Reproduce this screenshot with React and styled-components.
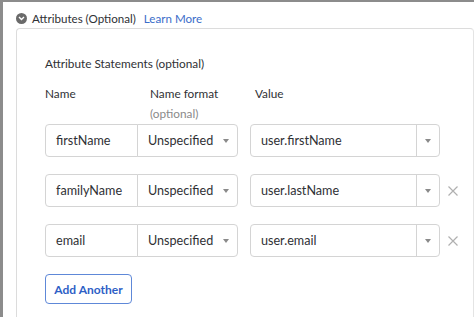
import React from 'react'
import styled, { createGlobalStyle } from 'styled-components'

const GlobalStyle = createGlobalStyle`
  html, body {
    margin: 0;
    padding: 0;
    background: #fff;
  }
  body {
    font-family: Lato, "Liberation Sans", sans-serif;
    color: #2f3135;
  }
`

const Frame = styled.div`
  width: 474px;
  height: 317px;
  box-sizing: border-box;
  border-top: 2px solid #8c8c8c;
  border-left: 3px solid #8c8c8c;
  overflow: hidden;
  padding: 8px 0 0 13px;
`

const SectionHeader = styled.div`
  display: flex;
  align-items: center;
  gap: 5px;
  height: 16px;
  font-size: 12px;
  margin-bottom: 2px;
`

const Toggle = styled.span`
  width: 11px;
  height: 11px;
  border-radius: 50%;
  background: #6a6a6a;
  display: flex;
  align-items: center;
  justify-content: center;
`

const HeaderTitle = styled.span`
  color: #2f3135;
  font-size: 11.6px;
`

const LearnMore = styled.a`
  color: #3b6dc9;
  margin-left: 3px;
  font-size: 11.6px;
  text-decoration: none;
`

const Card = styled.div`
  border: 1px solid #dcdcdc;
  border-right: 1px solid #e4e4e4;
  border-radius: 4px;
  padding: 26px 0 0 28px;
  height: 320px;
  box-sizing: border-box;
`

const CardTitle = styled.div`
  font-size: 11.8px;
  line-height: 18px;
  margin-bottom: 12px;
`

const Labels = styled.div`
  display: grid;
  grid-template-columns: 105px 105px 1fr;
  font-size: 11.8px;
  line-height: 18px;
  margin-bottom: 1px;
`

const Label = styled.div`
  display: flex;
  flex-direction: column;
  gap: 2px;
`

const Hint = styled.span`
  color: #8a8a8a;
`

const Rows = styled.div`
  display: flex;
  flex-direction: column;
  gap: 17px;
`

const Row = styled.div`
  display: flex;
  align-items: center;
`

const Field = styled.div`
  box-sizing: border-box;
  height: 33px;
  width: ${p => p.$w}px;
  border: 1px solid #d4d4d4;
  border-radius: ${p => p.$radius};
  margin-left: ${p => p.$ml || 0}px;
  display: flex;
  align-items: center;
  font-size: 12.6px;
  background: #fff;
`

const FieldText = styled.span`
  flex: 1;
  padding-left: ${p => p.$pl}px;
`

const Caret = styled.span`
  width: ${p => p.$w}px;
  align-self: stretch;
  display: flex;
  align-items: center;
  justify-content: center;
  border-left: ${p => (p.$divider ? '1px solid #d4d4d4' : 'none')};
`

const Remove = styled.span`
  width: 24px;
  margin-left: 1px;
  display: flex;
  align-items: center;
  justify-content: center;
`

const AddButton = styled.button`
  margin-top: 17px;
  height: 30px;
  width: 87px;
  box-sizing: border-box;
  border: 1px solid #5e88d8;
  border-radius: 4px;
  background: #fff;
  color: #2e5fc6;
  font-family: inherit;
  font-weight: 700;
  font-size: 12px;
  padding: 0;
`

const Tri = () => (
  <svg width="6" height="4" viewBox="0 0 6 4">
    <path d="M0 0h6L3 4z" fill="#8a8a8a" />
  </svg>
)

const Cross = () => (
  <svg width="10" height="10" viewBox="0 0 10 10">
    <path d="M.5.5l9 9M9.5.5l-9 9" stroke="#b0b0b0" strokeWidth="1.2" />
  </svg>
)

const rows = [
  { name: 'firstName', value: 'user.firstName', removable: false },
  { name: 'familyName', value: 'user.lastName', removable: true },
  { name: 'email', value: 'user.email', removable: true },
]

export default function App() {
  return (
    <>
      <GlobalStyle />
      <Frame>
        <SectionHeader>
          <Toggle>
            <svg width="7" height="5" viewBox="0 0 7 5">
              <path d="M1 1l2.5 2.5L6 1" stroke="#fff" strokeWidth="1.4" fill="none" />
            </svg>
          </Toggle>
          <HeaderTitle>Attributes (Optional)</HeaderTitle>
          <LearnMore href="#">Learn More</LearnMore>
        </SectionHeader>
        <Card>
          <CardTitle>Attribute Statements (optional)</CardTitle>
          <Labels>
            <Label>Name</Label>
            <Label>
              <span>Name format</span>
              <Hint>(optional)</Hint>
            </Label>
            <Label>Value</Label>
          </Labels>
          <Rows>
            {rows.map(r => (
              <Row key={r.name}>
                <Field $w={93} $radius="4px 0 0 4px">
                  <FieldText $pl={10}>{r.name}</FieldText>
                </Field>
                <Field $w={101} $radius="0 4px 4px 0" $ml={-1}>
                  <FieldText $pl={10}>Unspecified</FieldText>
                  <Caret $w={22}><Tri /></Caret>
                </Field>
                <Field $w={190} $radius="4px" $ml={12}>
                  <FieldText $pl={10}>{r.value}</FieldText>
                  <Caret $w={22} $divider><Tri /></Caret>
                </Field>
                {r.removable && (
                  <Remove><Cross /></Remove>
                )}
              </Row>
            ))}
          </Rows>
          <AddButton>Add Another</AddButton>
        </Card>
      </Frame>
    </>
  )
}
